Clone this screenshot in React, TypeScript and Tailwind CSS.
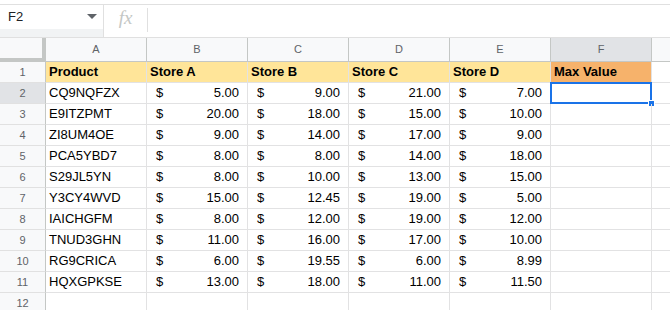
const rows = [
  ["CQ9NQFZX", "5.00", "9.00", "21.00", "7.00"],
  ["E9ITZPMT", "20.00", "18.00", "15.00", "10.00"],
  ["ZI8UM4OE", "9.00", "14.00", "17.00", "9.00"],
  ["PCA5YBD7", "8.00", "8.00", "14.00", "18.00"],
  ["S29JL5YN", "8.00", "10.00", "13.00", "15.00"],
  ["Y3CY4WVD", "15.00", "12.45", "19.00", "5.00"],
  ["IAICHGFM", "8.00", "12.00", "19.00", "12.00"],
  ["TNUD3GHN", "11.00", "16.00", "17.00", "10.00"],
  ["RG9CRICA", "6.00", "19.55", "6.00", "8.99"],
  ["HQXGPKSE", "13.00", "18.00", "11.00", "11.50"],
];

const cols = ["A", "B", "C", "D", "E", "F"];

function RowHead({ n, selected }: { n: number; selected?: boolean }) {
  return (
    <div
      className={`w-[46px] shrink-0 flex items-center justify-center border-r border-r-[#c4c7c5] border-b border-b-[#e1e1e1] text-[11px] text-[#5f6368] ${
        selected ? "bg-[#e1e3e6]" : "bg-[#f8f9fa]"
      }`}
    >
      {n}
    </div>
  );
}

function Money({ v }: { v: string }) {
  return (
    <div className="w-[101px] shrink-0 flex items-center justify-between pl-[9px] pr-[8px] border-r border-b border-[#e2e2e3]">
      <span>$</span>
      <span>{v}</span>
    </div>
  );
}

export default function App() {
  return (
    <div
      className="w-[670px] h-[310px] overflow-hidden bg-white text-[13px] text-black"
      style={{ fontFamily: '"Liberation Sans", Arial, sans-serif' }}
    >
      {/* formula bar */}
      <div className="h-[5px] border-b border-[#e0e0e0]" />
      <div className="flex h-[33px] border-b border-[#e0e0e0]">
        <div className="w-[104px] shrink-0 flex flex-col border-r border-[#e0e0e0]">
          <div className="h-[24px] flex items-center justify-between pl-[8px] pr-[6px] bg-white">
            <span className="text-[13px] text-[#202124]">F2</span>
            <svg width="10" height="6" viewBox="0 0 10 6">
              <path d="M0 0 L10 0 L5 5 Z" fill="#5f6368" />
            </svg>
          </div>
          <div className="flex-1 bg-[#f1f3f4]" />
        </div>
        <div className="w-[43px] shrink-0 flex items-center justify-center pb-[6px]">
          <span
            className="text-[19px] italic text-[#c4c7c5]"
            style={{ fontFamily: '"Liberation Serif", "Times New Roman", serif' }}
          >
            fx
          </span>
        </div>
        <div className="w-px my-[3px] mb-[5px] bg-[#e0e0e0]" />
        <div className="flex-1" />
      </div>

      {/* column headers */}
      <div className="flex h-[24px]">
        <div className="w-[46px] shrink-0 bg-[#f8f9fa] border-r-4 border-b-4 border-[#c4c7c5]" />
        {cols.map((c) => (
          <div
            key={c}
            className={`w-[101px] shrink-0 flex items-center justify-center border-r border-b border-[#c4c7c5] text-[11px] text-[#5f6368] ${
              c === "F" ? "bg-[#e1e3e6]" : "bg-[#f8f9fa]"
            }`}
          >
            {c}
          </div>
        ))}
        <div className="flex-1 bg-[#f8f9fa] border-b border-[#c4c7c5]" />
      </div>

      {/* header row */}
      <div className="flex h-[21px]">
        <RowHead n={1} />
        {["Product", "Store A", "Store B", "Store C", "Store D"].map((h) => (
          <div
            key={h}
            className="w-[101px] shrink-0 flex items-center pl-[3px] font-bold bg-[#ffe599] border-r border-b border-[#e2e2e3]"
          >
            {h}
          </div>
        ))}
        <div className="w-[101px] shrink-0 flex items-center pl-[3px] font-bold bg-[#f6b26b] border-r border-b border-[#e2e2e3]">
          Max Value
        </div>
        <div className="flex-1 border-b border-[#e2e2e3]" />
      </div>

      {rows.map((r, i) => (
        <div key={r[0]} className="flex h-[21px]">
          <RowHead n={i + 2} selected={i === 0} />
          <div className="w-[101px] shrink-0 flex items-center pl-[3px] border-r border-b border-[#e2e2e3]">
            {r[0]}
          </div>
          {r.slice(1).map((v, j) => (
            <Money key={j} v={v} />
          ))}
          <div className="relative w-[101px] shrink-0 border-r border-b border-[#e2e2e3]">
            {i === 0 && (
              <>
                <div className="absolute -left-px -top-px w-[102px] h-[22px] border-2 border-[#1a73e8]" />
                <div className="absolute -right-[4px] -bottom-[4px] w-[7px] h-[7px] bg-[#1a73e8] border border-white" />
              </>
            )}
          </div>
          <div className="flex-1 border-b border-[#e2e2e3]" />
        </div>
      ))}

      <div className="flex h-[21px]">
        <RowHead n={12} />
        {cols.map((c) => (
          <div key={c} className="w-[101px] shrink-0 border-r border-b border-[#e2e2e3]" />
        ))}
        <div className="flex-1 border-b border-[#e2e2e3]" />
      </div>
    </div>
  );
}
